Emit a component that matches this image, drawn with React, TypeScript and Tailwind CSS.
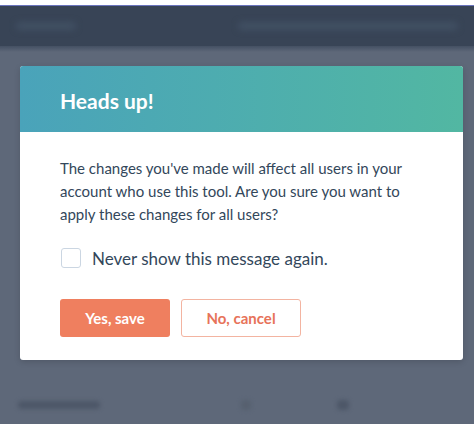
import React from "react";

export default function App() {
  return (
    <div
      className="w-[474px] h-[424px] overflow-hidden flex flex-col bg-[#5e6879]"
      style={{ fontFamily: "Lato, 'Open Sans', sans-serif" }}
    >
      <div className="h-[6px] bg-white border-b border-[#6a74bd] shrink-0" />
      <div className="h-[40px] shrink-0 bg-[#384456] flex items-center px-4 gap-6">
        <div className="w-[60px] h-[8px] bg-[#415063] rounded blur-[3px]" />
        <div className="ml-auto w-[220px] h-[8px] bg-[#415063] rounded blur-[3px]" />
      </div>
      <div className="h-[6px] shrink-0 bg-gradient-to-b from-[#445063] to-[#5e6879]" />
      <div className="pl-[20px] pr-[11px] pt-[14px] shrink-0">
        <div className="w-[443px] bg-white rounded-[3px] overflow-hidden shadow-[0_2px_6px_rgba(0,0,0,0.15)]">
          <div className="h-[66px] bg-gradient-to-r from-[#4aa3ba] to-[#52b7a2] flex items-center px-[40px]">
            <h1 className="text-white font-bold text-[21px] leading-none mt-[2px]">Heads up!</h1>
          </div>
          <div className="px-[40px] pt-[25px] pb-[23px] text-[#33475b]">
            <p className="text-[15px] leading-[23px] w-[360px]">
              The changes you've made will affect all users in your account who use this tool. Are you sure you want to apply these changes for all users?
            </p>
            <label className="flex items-center gap-[11px] mt-[22px] ml-[1px]">
              <span className="w-[20px] h-[20px] border border-[#cbd6e2] rounded-[3px] bg-white" />
              <span className="text-[17px] leading-none">Never show this message again.</span>
            </label>
            <div className="flex gap-[11px] mt-[31px]">
              <button className="w-[110px] h-[38px] rounded-[3px] bg-[#ef7f5f] text-white font-bold text-[15px]">
                Yes, save
              </button>
              <button className="w-[120px] h-[38px] rounded-[3px] bg-white border border-[#f3b4a1] text-[#e7735a] font-bold text-[15px]">
                No, cancel
              </button>
            </div>
          </div>
        </div>
      </div>
      <div className="flex items-center px-[18px] mt-[40px] gap-4">
        <div className="w-[82px] h-[8px] bg-[#4d5768] rounded blur-[2px]" />
        <div className="ml-[125px] w-[10px] h-[10px] bg-[#56606f] rounded blur-[2px]" />
        <div className="ml-[70px] w-[12px] h-[10px] bg-[#4d5768] rounded blur-[2px]" />
      </div>
    </div>
  );
}
